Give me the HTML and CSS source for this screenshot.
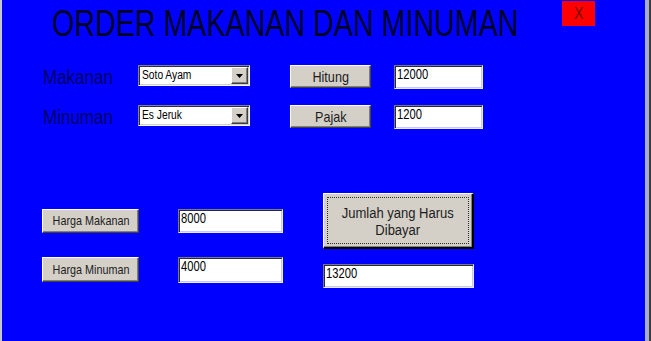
FILE: index.html
```html
<!DOCTYPE html>
<html lang="id">
<head>
<meta charset="utf-8">
<title>Order Makanan dan Minuman</title>
<link rel="stylesheet" href="styles.css">
</head>
<body>
<div class="window">
  <header class="titlebar">
    <h1 class="title"><span class="sq">ORDER MAKANAN DAN MINUMAN</span></h1>
    <button class="close"><span class="sq-c">X</span></button>
  </header>

  <section class="orders">
    <span class="label"><span class="sq">Makanan</span></span>
    <div class="combo">
      <span class="combo-text"><span class="sq">Soto Ayam</span></span>
      <span class="combo-btn"><svg width="7" height="4" viewBox="0 0 7 4"><path d="M0 0H7L3.5 4Z" fill="#000"/></svg></span>
    </div>
    <span></span>
    <button class="btn btn-row"><span class="sq-c">Hitung</span></button>
    <span></span>
    <div class="field"><span class="sq">12000</span></div>

    <span class="label"><span class="sq">Minuman</span></span>
    <div class="combo">
      <span class="combo-text"><span class="sq">Es Jeruk</span></span>
      <span class="combo-btn"><svg width="7" height="4" viewBox="0 0 7 4"><path d="M0 0H7L3.5 4Z" fill="#000"/></svg></span>
    </div>
    <span></span>
    <button class="btn btn-row"><span class="sq-c">Pajak</span></button>
    <span></span>
    <div class="field"><span class="sq">1200</span></div>
  </section>

  <section class="totals">
    <div class="prices">
      <button class="btn btn-small"><span class="sq-c">Harga Makanan</span></button>
      <span></span>
      <div class="field"><span class="sq">8000</span></div>
      <button class="btn btn-small btn-tall"><span class="sq-c">Harga Minuman</span></button>
      <span></span>
      <div class="field field-tall"><span class="sq">4000</span></div>
    </div>
    <div class="pay">
      <button class="btn btn-default"><span class="focus"><span class="sq-c">Jumlah yang Harus<br>Dibayar</span></span></button>
      <div class="field"><span class="sq">13200</span></div>
    </div>
  </section>
</div>
</body>
</html>
```

FILE: styles.css
```css
* { box-sizing: border-box; }

html, body {
  margin: 0;
  padding: 0;
}

body {
  background: #3c3c44;
  width: 651px;
  height: 341px;
  overflow: hidden;
  font-family: "Liberation Sans", Arial, sans-serif;
}

/* condensed text, like the narrow system font of the original form */
.sq {
  display: inline-block;
  white-space: nowrap;
  transform: scaleX(0.82);
  transform-origin: left center;
}

.sq-c {
  display: inline-block;
  white-space: nowrap;
  transform: scaleX(0.84);
  transform-origin: center center;
}

.window {
  box-sizing: content-box;
  width: 643px;
  height: 341px;
  background: #0000ff;
  border-left: 2px solid #c6c6cc;
  border-right: 4px solid #a9aec8;
}

.titlebar {
  display: flex;
  align-items: flex-start;
  height: 44px;
}

.title {
  flex: 0 0 468px;
  min-width: 0;
  margin: 6px 0 0 50px;
  font-size: 36px;
  line-height: 36px;
  font-weight: normal;
  color: #000028;
  white-space: nowrap;
}

.title .sq { transform: scaleX(0.796); }

.close {
  flex: none;
  margin: 1px 50px 0 auto;
  width: 33px;
  height: 25px;
  padding: 0;
  border: none;
  background: #ff0000;
  color: #7a0000;
  font-family: inherit;
  font-size: 17px;
  line-height: 25px;
}

.orders {
  display: grid;
  grid-template-columns: 95px 112px 40px 81px 23px 89px;
  grid-auto-rows: 24px;
  row-gap: 16px;
  align-items: start;
  padding: 21px 0 0 41px;
}

.label {
  font-size: 20px;
  line-height: 24px;
  color: #000066;
  white-space: nowrap;
}

.label .sq { transform: scaleX(0.85); }

.combo {
  display: flex;
  align-items: flex-start;
  height: 21px;
  background: #fff;
  border-top: 1px solid #808090;
  border-left: 1px solid #808090;
  border-bottom: 1px solid #f4f4ff;
  border-right: 1px solid #f4f4ff;
  box-shadow: inset 1px 1px 0 #303038, inset -1px -1px 0 #d4d0c8;
  padding: 1px;
}

.combo-text {
  flex: 1;
  font-size: 12.5px;
  line-height: 15px;
  padding: 1px 0 0 2px;
  color: #000;
}

.combo-btn {
  display: flex;
  align-items: center;
  justify-content: center;
  width: 17px;
  height: 17px;
  background: #d4d0c8;
  border-top: 1px solid #fff;
  border-left: 1px solid #fff;
  border-bottom: 1px solid #404040;
  border-right: 1px solid #404040;
  box-shadow: inset -1px -1px 0 #808080;
}

.combo-btn svg { display: block; margin-top: 1px; }

.btn {
  padding: 0;
  margin: 0;
  background: #d4d0c8;
  border-top: 1px solid #fff;
  border-left: 1px solid #fff;
  border-bottom: 1px solid #404040;
  border-right: 1px solid #404040;
  box-shadow: inset -1px -1px 0 #808080;
  font-family: inherit;
  color: #1c1c1c;
  white-space: nowrap;
}

.btn-row {
  height: 23px;
  font-size: 15px;
  line-height: 20px;
}

.btn-small {
  height: 24px;
  font-size: 13.5px;
  line-height: 20px;
}

.btn-small .sq-c { transform: scaleX(0.8); }

.btn-tall { height: 25px; }

.field {
  height: 24px;
  background: #fff;
  border-top: 1px solid #767690;
  border-left: 1px solid #767690;
  border-bottom: 1px solid #e8e8ff;
  border-right: 1px solid #e8e8ff;
  box-shadow: inset 1px 1px 0 #2c2c34, inset -1px -1px 0 #c8c8e8;
  padding: 1px 0 0 2px;
  font-size: 14px;
  line-height: 14px;
  color: #000;
}

.field .sq { transform: scaleX(0.8); }

.field-tall { height: 26px; }

.totals {
  display: flex;
  align-items: flex-start;
  margin-top: 64px;
  padding-left: 40px;
}

.prices {
  display: grid;
  grid-template-columns: 97px 39px 105px;
  grid-auto-rows: 24px;
  row-gap: 24px;
  align-items: start;
  margin-top: 16px;
}

.pay {
  display: flex;
  flex-direction: column;
  gap: 15px;
  margin-left: 40px;
  width: 151px;
}

.btn-default {
  height: 56px;
  border-bottom: 2px solid #000;
  border-right: 2px solid #000;
  padding: 3px;
  font-size: 15.5px;
  line-height: 17px;
}

.focus {
  display: flex;
  align-items: center;
  justify-content: center;
  height: 100%;
  border: 1px dotted #303030;
  text-align: center;
}
```
